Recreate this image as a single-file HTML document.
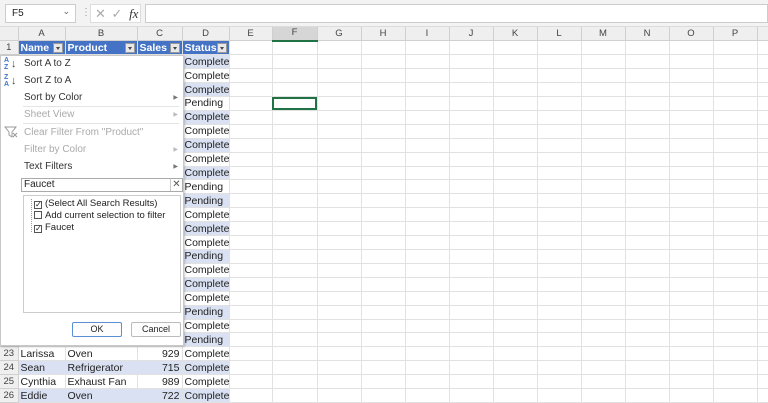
<!DOCTYPE html>
<html><head><meta charset="utf-8"><style>
*{margin:0;padding:0;box-sizing:border-box}
body{width:768px;height:403px;overflow:hidden;background:#fff;font-family:"Liberation Sans",sans-serif;font-size:11px;color:#222;position:relative}
.top{position:absolute;left:0;top:0;width:768px;height:27px;background:#f3f3f3;border-bottom:1px solid #dcdcdc}
.nb{position:absolute;left:5px;top:4px;width:71px;height:19px;background:#fff;border:1px solid #ccc;padding:3px 6px;font-size:10px}
.fb{position:absolute;left:145px;top:4px;width:623px;height:19px;background:#fff;border:1px solid #ccc}
.ib{position:absolute;left:90px;top:4px;width:51px;height:19px;background:#fff;border:1px solid #ddd;color:#aaa;font-size:13px;line-height:17px}
table{position:absolute;left:0;top:27px;width:768px;border-collapse:collapse;table-layout:fixed}
td{height:13.92px;border-right:1px solid #e1e1e1;border-bottom:1px solid #e1e1e1;padding:0 2px;white-space:nowrap;overflow:hidden;font-size:10.5px;line-height:12px}
tr.h td{background:#efefef;text-align:center;color:#444;border-color:#d0d0d0;font-size:9.5px}
td.rn{background:#efefef;text-align:center;color:#444;border-color:#d0d0d0;font-size:9.5px;padding:0}
tr.t td.c{background:#4472c4;color:#fff;font-weight:bold;position:relative}
.fbtn{position:absolute;right:2px;top:2px;width:10px;height:10px;background:#e8e8e8;border:1px solid #999}
.fbtn:after{content:"";position:absolute;left:2px;top:3px;border-left:2.5px solid transparent;border-right:2.5px solid transparent;border-top:3px solid #444}
.s td.c{background:#d9e1f2}
.menu{position:absolute;left:0;top:55px;width:184px;height:291px;background:#fff;border:1px solid #c8c8c8;box-shadow:1px 1px 2px rgba(0,0,0,.2)}
.mi{position:absolute;left:23px;font-size:10px;color:#333}
.g{color:#aaa}
.sep{position:absolute;left:22px;right:4px;height:1px;background:#e4e4e4}
.arr{position:absolute;right:5px;font-size:6px;color:#777}
.btn{position:absolute;top:266px;height:15px;border:1px solid #bbb;border-radius:2px;background:#fdfdfd;font-size:9px;text-align:center;line-height:13px}
.cb{display:inline-block;width:8px;height:8px;border:1px solid #555;vertical-align:-1px;margin-right:3px;font-size:8px;line-height:6px;text-align:center}
</style></head><body>
<div class="top">
<div class="nb">F5<span style="position:absolute;right:5px;top:1px;color:#666;font-size:9px">&#8964;</span></div>
<div style="position:absolute;left:81px;top:7px;color:#999;font-size:10px">&#8942;</div>
<div class="ib"><span style="margin-left:4px">&#10005;</span> <span style="margin-left:2px">&#10003;</span> <i style="color:#333;font-family:'Liberation Serif',serif;margin-left:3px">fx</i></div>
<div class="fb"></div>
</div>
<table>
<colgroup><col style="width:18px"><col style="width:47px"><col style="width:72px"><col style="width:45px"><col style="width:47px"><col style="width:43px"><col style="width:45px"><col style="width:44px"><col style="width:44px"><col style="width:44px"><col style="width:44px"><col style="width:44px"><col style="width:44px"><col style="width:44px"><col style="width:44px"><col style="width:44px"><col style="width:44px"><col style="width:11px"></colgroup>
<tr class="h"><td></td><td>A</td><td>B</td><td>C</td><td>D</td><td>E</td><td style="background:#d6d6d6;border-bottom:2px solid #217346">F</td><td>G</td><td>H</td><td>I</td><td>J</td><td>K</td><td>L</td><td>M</td><td>N</td><td>O</td><td>P</td><td></td></tr>
<tr class="t"><td class="rn">1</td><td class="c">Name<span class="fbtn"></span></td><td class="c">Product<span class="fbtn"></span></td><td class="c">Sales<span class="fbtn"></span></td><td class="c">Status<span class="fbtn"></span></td><td></td><td></td><td></td><td></td><td></td><td></td><td></td><td></td><td></td><td></td><td></td><td></td><td></td></tr>
<tr class="s"><td class="rn">2</td><td class="c"></td><td class="c"></td><td class="c"></td><td class="c">Complete</td><td></td><td></td><td></td><td></td><td></td><td></td><td></td><td></td><td></td><td></td><td></td><td></td><td></td></tr>
<tr><td class="rn">3</td><td class="c"></td><td class="c"></td><td class="c"></td><td class="c">Complete</td><td></td><td></td><td></td><td></td><td></td><td></td><td></td><td></td><td></td><td></td><td></td><td></td><td></td></tr>
<tr class="s"><td class="rn">4</td><td class="c"></td><td class="c"></td><td class="c"></td><td class="c">Complete</td><td></td><td></td><td></td><td></td><td></td><td></td><td></td><td></td><td></td><td></td><td></td><td></td><td></td></tr>
<tr><td class="rn">5</td><td class="c"></td><td class="c"></td><td class="c"></td><td class="c">Pending</td><td></td><td style="outline:2px solid #217346;outline-offset:-2px"></td><td></td><td></td><td></td><td></td><td></td><td></td><td></td><td></td><td></td><td></td><td></td></tr>
<tr class="s"><td class="rn">6</td><td class="c"></td><td class="c"></td><td class="c"></td><td class="c">Complete</td><td></td><td></td><td></td><td></td><td></td><td></td><td></td><td></td><td></td><td></td><td></td><td></td><td></td></tr>
<tr><td class="rn">7</td><td class="c"></td><td class="c"></td><td class="c"></td><td class="c">Complete</td><td></td><td></td><td></td><td></td><td></td><td></td><td></td><td></td><td></td><td></td><td></td><td></td><td></td></tr>
<tr class="s"><td class="rn">8</td><td class="c"></td><td class="c"></td><td class="c"></td><td class="c">Complete</td><td></td><td></td><td></td><td></td><td></td><td></td><td></td><td></td><td></td><td></td><td></td><td></td><td></td></tr>
<tr><td class="rn">9</td><td class="c"></td><td class="c"></td><td class="c"></td><td class="c">Complete</td><td></td><td></td><td></td><td></td><td></td><td></td><td></td><td></td><td></td><td></td><td></td><td></td><td></td></tr>
<tr class="s"><td class="rn">10</td><td class="c"></td><td class="c"></td><td class="c"></td><td class="c">Complete</td><td></td><td></td><td></td><td></td><td></td><td></td><td></td><td></td><td></td><td></td><td></td><td></td><td></td></tr>
<tr><td class="rn">11</td><td class="c"></td><td class="c"></td><td class="c"></td><td class="c">Pending</td><td></td><td></td><td></td><td></td><td></td><td></td><td></td><td></td><td></td><td></td><td></td><td></td><td></td></tr>
<tr class="s"><td class="rn">12</td><td class="c"></td><td class="c"></td><td class="c"></td><td class="c">Pending</td><td></td><td></td><td></td><td></td><td></td><td></td><td></td><td></td><td></td><td></td><td></td><td></td><td></td></tr>
<tr><td class="rn">13</td><td class="c"></td><td class="c"></td><td class="c"></td><td class="c">Complete</td><td></td><td></td><td></td><td></td><td></td><td></td><td></td><td></td><td></td><td></td><td></td><td></td><td></td></tr>
<tr class="s"><td class="rn">14</td><td class="c"></td><td class="c"></td><td class="c"></td><td class="c">Complete</td><td></td><td></td><td></td><td></td><td></td><td></td><td></td><td></td><td></td><td></td><td></td><td></td><td></td></tr>
<tr><td class="rn">15</td><td class="c"></td><td class="c"></td><td class="c"></td><td class="c">Complete</td><td></td><td></td><td></td><td></td><td></td><td></td><td></td><td></td><td></td><td></td><td></td><td></td><td></td></tr>
<tr class="s"><td class="rn">16</td><td class="c"></td><td class="c"></td><td class="c"></td><td class="c">Pending</td><td></td><td></td><td></td><td></td><td></td><td></td><td></td><td></td><td></td><td></td><td></td><td></td><td></td></tr>
<tr><td class="rn">17</td><td class="c"></td><td class="c"></td><td class="c"></td><td class="c">Complete</td><td></td><td></td><td></td><td></td><td></td><td></td><td></td><td></td><td></td><td></td><td></td><td></td><td></td></tr>
<tr class="s"><td class="rn">18</td><td class="c"></td><td class="c"></td><td class="c"></td><td class="c">Complete</td><td></td><td></td><td></td><td></td><td></td><td></td><td></td><td></td><td></td><td></td><td></td><td></td><td></td></tr>
<tr><td class="rn">19</td><td class="c"></td><td class="c"></td><td class="c"></td><td class="c">Complete</td><td></td><td></td><td></td><td></td><td></td><td></td><td></td><td></td><td></td><td></td><td></td><td></td><td></td></tr>
<tr class="s"><td class="rn">20</td><td class="c"></td><td class="c"></td><td class="c"></td><td class="c">Pending</td><td></td><td></td><td></td><td></td><td></td><td></td><td></td><td></td><td></td><td></td><td></td><td></td><td></td></tr>
<tr><td class="rn">21</td><td class="c"></td><td class="c"></td><td class="c"></td><td class="c">Complete</td><td></td><td></td><td></td><td></td><td></td><td></td><td></td><td></td><td></td><td></td><td></td><td></td><td></td></tr>
<tr class="s"><td class="rn">22</td><td class="c"></td><td class="c"></td><td class="c"></td><td class="c">Pending</td><td></td><td></td><td></td><td></td><td></td><td></td><td></td><td></td><td></td><td></td><td></td><td></td><td></td></tr>
<tr><td class="rn">23</td><td class="c">Larissa</td><td class="c">Oven</td><td class="c" style="text-align:right">929</td><td class="c">Complete</td><td></td><td></td><td></td><td></td><td></td><td></td><td></td><td></td><td></td><td></td><td></td><td></td><td></td></tr>
<tr class="s"><td class="rn">24</td><td class="c">Sean</td><td class="c">Refrigerator</td><td class="c" style="text-align:right">715</td><td class="c">Complete</td><td></td><td></td><td></td><td></td><td></td><td></td><td></td><td></td><td></td><td></td><td></td><td></td><td></td></tr>
<tr><td class="rn">25</td><td class="c">Cynthia</td><td class="c">Exhaust Fan</td><td class="c" style="text-align:right">989</td><td class="c">Complete</td><td></td><td></td><td></td><td></td><td></td><td></td><td></td><td></td><td></td><td></td><td></td><td></td><td></td></tr>
<tr class="s"><td class="rn">26</td><td class="c">Eddie</td><td class="c">Oven</td><td class="c" style="text-align:right">722</td><td class="c">Complete</td><td></td><td></td><td></td><td></td><td></td><td></td><td></td><td></td><td></td><td></td><td></td><td></td><td></td></tr>
</table>
<div class="menu">
<div style="position:absolute;left:3px;top:1px;font-size:7px;line-height:7px;font-weight:bold;color:#3a78c8">A<br>Z</div><div style="position:absolute;left:10px;top:2px;font-size:11px;color:#444">&#8595;</div>
<div class="mi" style="top:2px">Sort A to Z</div>
<div style="position:absolute;left:3px;top:18px;font-size:7px;line-height:7px;font-weight:bold;color:#3a78c8">Z<br>A</div><div style="position:absolute;left:10px;top:19px;font-size:11px;color:#444">&#8595;</div>
<div class="mi" style="top:19px">Sort Z to A</div>
<div class="mi" style="top:36px">Sort by Color</div><div class="arr" style="top:38px">&#9654;</div>
<div class="sep" style="top:50px"></div>
<div class="mi g" style="top:53px">Sheet View</div><div class="arr" style="top:55px;color:#bbb">&#9654;</div>
<div class="sep" style="top:67px"></div>
<svg style="position:absolute;left:3px;top:70px" width="14" height="12"><path d="M1 1h11l-4 5v5l-3-2v-3z" fill="none" stroke="#999"/><path d="M9 7l4 4M13 7l-4 4" stroke="#999"/></svg>
<div class="mi g" style="top:71px">Clear Filter From "Product"</div>
<div class="mi g" style="top:88px">Filter by Color</div><div class="arr" style="top:90px;color:#bbb">&#9654;</div>
<div class="mi" style="top:105px">Text Filters</div><div class="arr" style="top:107px">&#9654;</div>
<div style="position:absolute;left:20px;top:122px;width:162px;height:14px;border:1px solid #aaa;font-size:10px;padding-left:2px;line-height:12px">Faucet<span style="position:absolute;right:0;top:0;width:12px;height:12px;border-left:1px solid #ccc;text-align:center;color:#555">&#10005;</span></div>
<div style="position:absolute;left:22px;top:139px;width:158px;height:118px;border:1px solid #ccc">
<div style="position:absolute;left:7px;top:3px;width:1px;height:33px;border-left:1px dotted #999"></div>
<div style="position:absolute;left:10px;top:2px;font-size:9.5px;white-space:nowrap"><span class="cb">&#10003;</span>(Select All Search Results)</div>
<div style="position:absolute;left:10px;top:14px;font-size:9.5px;white-space:nowrap"><span class="cb"></span>Add current selection to filter</div>
<div style="position:absolute;left:10px;top:26px;font-size:9.5px;white-space:nowrap"><span class="cb">&#10003;</span>Faucet</div>
</div>
<div class="btn" style="left:71px;width:50px;border-color:#5a8fd6">OK</div>
<div class="btn" style="left:130px;width:50px">Cancel</div>
</div>
</body></html>
